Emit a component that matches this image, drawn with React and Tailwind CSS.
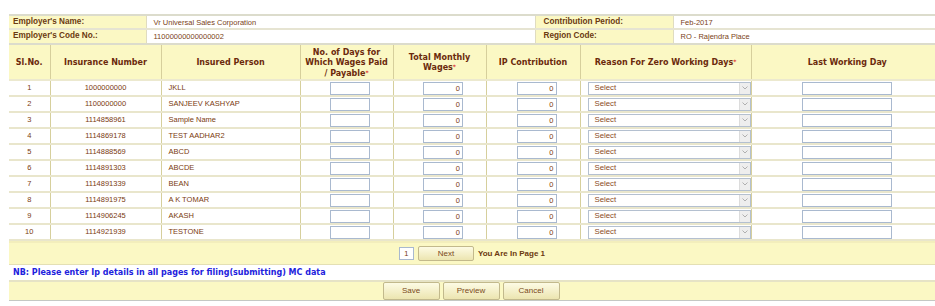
import React from 'react';

const rows = [
  ['1', '1000000000', 'JKLL'],
  ['2', '1100000000', 'SANJEEV KASHYAP'],
  ['3', '1114858961', 'Sample Name'],
  ['4', '1114869178', 'TEST AADHAR2'],
  ['5', '1114888569', 'ABCD'],
  ['6', '1114891303', 'ABCDE'],
  ['7', '1114891339', 'BEAN'],
  ['8', '1114891975', 'A K TOMAR'],
  ['9', '1114906245', 'AKASH'],
  ['10', '1114921939', 'TESTONE'],
];

const Star = () => <span className="text-[#e03030] text-[6px] leading-none relative -top-[1px]">*</span>;

const Box = ({ w, value }) => (
  <input
    readOnly
    value={value}
    className={`${w} h-[13px] border border-[#a9b9cf] bg-white text-right pr-[2px] text-[7.5px] text-[#7b3b10] outline-none`}
  />
);

const SelectBox = () => (
  <div className="w-[163px] h-[13px] border border-[#b4c0d0] bg-white flex items-center">
    <span className="flex-1 pl-[6px] text-[7.8px] text-[#8a4a1c]">Select</span>
    <span className="w-[11px] h-full bg-[#eeeeee] border-l border-[#dcdcdc] flex items-center justify-center">
      <svg width="6" height="4" viewBox="0 0 6 4">
        <path d="M0.5 0.5 L3 3 L5.5 0.5" fill="none" stroke="#a0a0a0" strokeWidth="0.8" />
      </svg>
    </span>
  </div>
);

const Btn = ({ children, w }) => (
  <button className={`${w} h-[18px] rounded-[2px] border border-[#c2b98c] bg-gradient-to-b from-[#fdfbe4] to-[#ece5b0] text-[8px] text-[#7a4a20]`}>
    {children}
  </button>
);

export default function App() {
  const th = 'border-r border-[#d6cf9c] font-bold text-[#6b2a0c] text-center align-middle leading-[10.5px] px-[2px] pt-[3px]';
  const td = 'border-r border-[#d6cf9c] border-b-2 border-b-[#e9e6cc] align-middle';
  return (
    <div className="w-[935px] h-[306px] overflow-hidden bg-white" style={{ fontFamily: '"Liberation Sans", Arial, sans-serif' }}>
      <div className="w-[934px] ml-[9px] pt-[14px]">
        <table className="w-[934px] table-fixed border-collapse border-t-2 border-[#dcdccc] text-[7.5px]">
          <colgroup>
            <col className="w-[137px]" />
            <col className="w-[389px]" />
            <col className="w-[138px]" />
            <col className="w-[270px]" />
          </colgroup>
          <tbody>
            <tr className="h-[14px] border-b-2 border-[#e6e4d2]">
              <td className="bg-[#fbf8c4] pl-[4px] font-bold text-[8.2px] text-[#6b3a10] border-r border-[#e0dcc0]">Employer's Name:</td>
              <td className="pl-[7px] text-[#7b3f20] border-r border-[#e0dcc0]">Vr Universal Sales Corporation</td>
              <td className="bg-[#fbf8c4] pl-[8px] font-bold text-[8.2px] text-[#6b3a10] border-r border-[#e0dcc0]">Contribution Period:</td>
              <td className="pl-[7px] text-[#7b3f20]">Feb-2017</td>
            </tr>
            <tr className="h-[14px] border-b-2 border-[#dcdccc]">
              <td className="bg-[#fbf8c4] pl-[4px] font-bold text-[8.2px] text-[#6b3a10] border-r border-[#e0dcc0]">Employer's Code No.:</td>
              <td className="pl-[7px] text-[#7b3f20] border-r border-[#e0dcc0]">11000000000000002</td>
              <td className="bg-[#fbf8c4] pl-[8px] font-bold text-[8.2px] text-[#6b3a10] border-r border-[#e0dcc0]">Region Code:</td>
              <td className="pl-[7px] text-[#7b3f20]">RO - Rajendra Place</td>
            </tr>
          </tbody>
        </table>

        <table className="w-[934px] table-fixed border-collapse text-[7.5px] text-[#7b3b10]">
          <colgroup>
            <col className="w-[41px]" />
            <col className="w-[111px]" />
            <col className="w-[139px]" />
            <col className="w-[93px]" />
            <col className="w-[93px]" />
            <col className="w-[94px]" />
            <col className="w-[171px]" />
            <col className="w-[192px]" />
          </colgroup>
          <thead>
            <tr className="h-[35px] bg-[#fbf8c4] text-[8px] border-b-2 border-[#ece9cf]" style={{ fontFamily: '"DejaVu Sans", Verdana, sans-serif' }}>
              <th className={th}>Sl.No.</th>
              <th className={th}>Insurance Number</th>
              <th className={th}>Insured Person</th>
              <th className={th}>No. of Days for<br />Which Wages Paid<br />/ Payable<Star /></th>
              <th className={th}>Total Monthly<br />Wages<Star /></th>
              <th className={th}>IP Contribution</th>
              <th className={th}>Reason For Zero Working Days<Star /></th>
              <th className={`${th} border-r-0`}>Last Working Day</th>
            </tr>
          </thead>
          <tbody>
            {rows.map(([n, ins, name], i) => (
              <tr key={n} className={`h-[16px] ${i === rows.length - 1 ? 'border-b border-[#d9a88a]' : ''}`}>
                <td className={`${td} text-center`}>{n}</td>
                <td className={`${td} text-center`}>{ins}</td>
                <td className={`${td} pl-[7px]`}>{name}</td>
                <td className={`${td} text-center pl-[7px]`}><Box w="w-[40px]" value="" /></td>
                <td className={`${td} text-center pl-[7px]`}><Box w="w-[40px]" value="0" /></td>
                <td className={`${td} text-center pl-[7px]`}><Box w="w-[40px]" value="0" /></td>
                <td className={`${td} pl-[7px]`}><SelectBox /></td>
                <td className={`${td} border-r-0 text-center`}><Box w="w-[90px]" value="" /></td>
              </tr>
            ))}
          </tbody>
        </table>

        <div className="h-[24px] bg-[#fbf8c4] border-t-2 border-[#f3eebc] border-b border-b-[#e4e0b4] flex items-center justify-center gap-[4px] pr-[8px]">
          <input readOnly value="1" className="w-[15px] h-[13px] border border-[#a9b9cf] bg-white text-center text-[7.5px] text-[#7b3b10] outline-none" />
          <button className="w-[56px] h-[15px] rounded-[2px] border border-[#c2b98c] bg-gradient-to-b from-[#fdfbe4] to-[#ece5b0] text-[8px] text-[#7a4a20]">Next</button>
          <span className="font-bold text-[8px] text-[#6b3a10]">You Are In Page 1</span>
        </div>

        <div className="h-[15px] flex items-center pl-[4px] font-bold text-[8px] text-[#2222dd]" style={{ fontFamily: '"DejaVu Sans", Verdana, sans-serif' }}>
          NB: Please enter Ip details in all pages for filing(submitting) MC data
        </div>

        <div className="h-[21px] bg-[#fbf8c4] border-t-2 border-[#e6e3c6] border-b border-b-[#c4c8c4] flex items-center justify-center gap-[3px] pr-[10px]">
          <Btn w="w-[57px]">Save</Btn>
          <Btn w="w-[57px]">Preview</Btn>
          <Btn w="w-[57px]">Cancel</Btn>
        </div>

        <div className="mt-[6px] border-t-2 border-[#b8b8ac]" />
      </div>
    </div>
  );
}
